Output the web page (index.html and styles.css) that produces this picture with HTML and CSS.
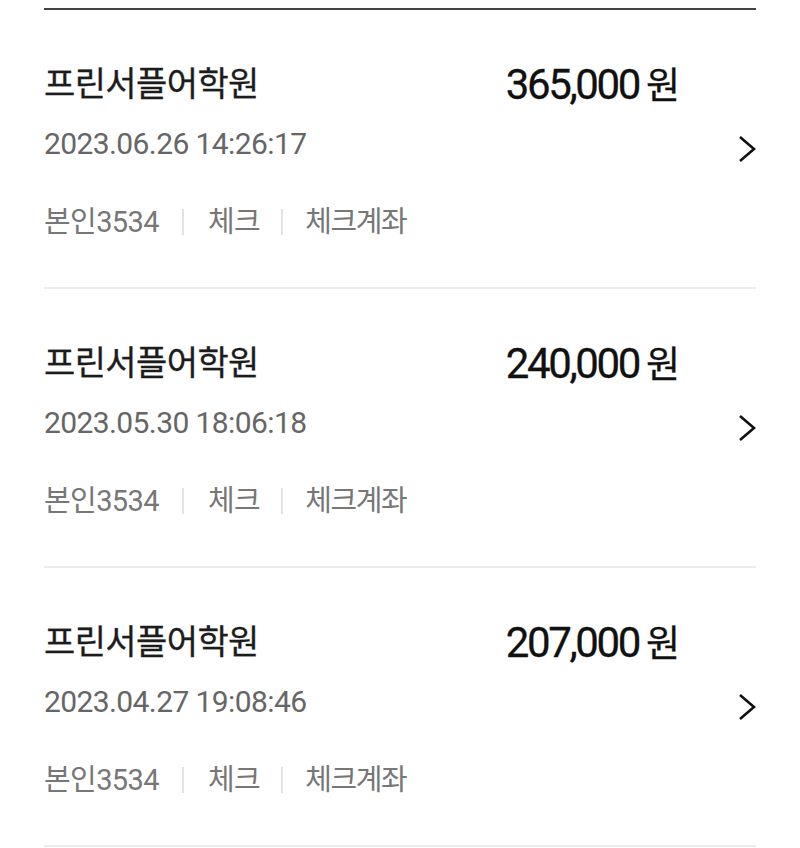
FILE: index.html
```html
<!DOCTYPE html>
<html lang="ko">
<head>
    <meta charset="UTF-8">
    <meta name="viewport" content="width=device-width, initial-scale=1.0">
    <title>결제내역</title>
    <link rel="stylesheet" href="styles.css">
</head>
<body>
    <ul class="pay-list">
        <li class="pay-item">
            <div class="pay-info">
                <div class="pay-top">
                    <span class="pay-name">프린서플어학원</span>
                    <span class="pay-amount">365,000<em>원</em></span>
                </div>
                <div class="pay-date">2023.06.26 14:26:17</div>
                <div class="pay-tags">
                    <span>본인3534</span>
                    <span>체크</span>
                    <span>체크계좌</span>
                </div>
            </div>
            <svg class="chevron" viewBox="0 0 18 28" width="18" height="28">
                <path d="M2 2 L16 14 L2 26" fill="none" stroke="#111" stroke-width="2.6"/>
            </svg>
        </li>
        <li class="pay-item">
            <div class="pay-info">
                <div class="pay-top">
                    <span class="pay-name">프린서플어학원</span>
                    <span class="pay-amount">240,000<em>원</em></span>
                </div>
                <div class="pay-date">2023.05.30 18:06:18</div>
                <div class="pay-tags">
                    <span>본인3534</span>
                    <span>체크</span>
                    <span>체크계좌</span>
                </div>
            </div>
            <svg class="chevron" viewBox="0 0 18 28" width="18" height="28">
                <path d="M2 2 L16 14 L2 26" fill="none" stroke="#111" stroke-width="2.6"/>
            </svg>
        </li>
        <li class="pay-item">
            <div class="pay-info">
                <div class="pay-top">
                    <span class="pay-name">프린서플어학원</span>
                    <span class="pay-amount">207,000<em>원</em></span>
                </div>
                <div class="pay-date">2023.04.27 19:08:46</div>
                <div class="pay-tags">
                    <span>본인3534</span>
                    <span>체크</span>
                    <span>체크계좌</span>
                </div>
            </div>
            <svg class="chevron" viewBox="0 0 18 28" width="18" height="28">
                <path d="M2 2 L16 14 L2 26" fill="none" stroke="#111" stroke-width="2.6"/>
            </svg>
        </li>
    </ul>
</body>
</html>
```

FILE: styles.css
```css
body {
    margin: 0;
    padding: 8px 44px 0;
    font-family: Roboto, "Noto Sans CJK KR", sans-serif;
    background-color: #fff;
    color: #222;
}
.pay-list {
    list-style: none;
    margin: 0;
    padding: 0;
    border-top: 2px solid #444;
}
.pay-item {
    display: flex;
    align-items: center;
    border-bottom: 2px solid #ececec;
}
.pay-info {
    flex: 1;
    margin-right: 58px;
    padding: 53px 0 47px;
}
.pay-top {
    display: flex;
    justify-content: space-between;
    align-items: center;
    height: 40px;
}
.pay-name {
    font-family: "Noto Sans CJK KR", sans-serif;
    font-size: 34px;
    font-weight: 400;
    letter-spacing: -0.6px;
    color: #1c1c1c;
    margin-top: -4px;
    -webkit-text-stroke: 0.3px #1c1c1c;
}
.pay-amount {
    font-size: 42px;
    font-weight: 400;
    letter-spacing: -2.4px;
    color: #111;
    -webkit-text-stroke: 0.3px #111;
}
.pay-amount em {
    font-family: "Noto Sans CJK KR", sans-serif;
    font-style: normal;
    font-size: 37px;
    font-weight: 400;
    letter-spacing: 0;
    margin-left: 7px;
}
.pay-date {
    margin-top: 23px;
    height: 36px;
    line-height: 36px;
    font-size: 30px;
    letter-spacing: -0.6px;
    color: #666;
}
.pay-tags {
    margin-top: 42px;
    height: 36px;
    line-height: 36px;
    display: flex;
    align-items: center;
    font-size: 29px;
    letter-spacing: -0.6px;
    color: #777;
}
.pay-tags span + span {
    margin-left: 23px;
    padding-left: 24px;
    border-left: 2px solid #e2e2e2;
    line-height: 26px;
}
.pay-tags span:last-child {
    margin-left: 21px;
    padding-left: 22px;
    letter-spacing: -1.4px;
}
.chevron {
    flex-shrink: 0;
}
```
